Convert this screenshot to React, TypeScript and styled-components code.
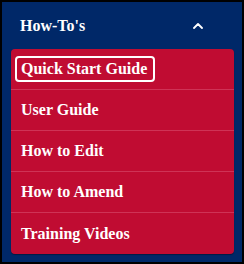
import React from "react";
import styled, { createGlobalStyle } from "styled-components";

const Global = createGlobalStyle`
  html, body { margin: 0; padding: 0; background: #000; }
  * { box-sizing: border-box; }
`;

const Frame = styled.div`
  width: 244px;
  height: 264px;
  border: 2px solid #000;
  background: #002868;
  display: flex;
  flex-direction: column;
  font-family: "Liberation Serif", "Times New Roman", serif;
`;

const Header = styled.div`
  height: 47px;
  display: flex;
  align-items: center;
  justify-content: space-between;
  padding: 0 39px 0 18px;
  color: #fff;
  font-size: 16px;
  font-weight: 700;
`;

const Title = styled.span`
  line-height: 1;
  padding-top: 1px;
`;

const Panel = styled.ul`
  list-style: none;
  margin: 0 8px 8px 9px;
  padding: 0;
  background: #c00c32;
  border-radius: 4px;
  box-shadow: 0 1px 1px rgba(0, 0, 0, 0.35);
  display: flex;
  flex-direction: column;
`;

const Row = styled.li<{ $last?: boolean }>`
  height: 41px;
  display: flex;
  align-items: center;
  padding-left: 4px;
  border-bottom: ${(p) => (p.$last ? "none" : "1px solid #cf3356")};
`;

const Link = styled.a<{ $focused?: boolean }>`
  display: inline-flex;
  align-items: center;
  height: 26px;
  padding: 0 6px 0 4px;
  border: 2px solid ${(p) => (p.$focused ? "#fff" : "transparent")};
  border-radius: 4px;
  color: #fff;
  font-size: 16px;
  font-weight: 700;
  text-decoration: none;
  white-space: nowrap;
`;

const Chevron = () => (
  <svg width="10" height="6" viewBox="0 0 10 6" fill="none">
    <path d="M1 5 L5 1 L9 5" stroke="#fff" strokeWidth="1.8" strokeLinecap="round" strokeLinejoin="round" />
  </svg>
);

const items = ["Quick Start Guide", "User Guide", "How to Edit", "How to Amend", "Training Videos"];

export default function App() {
  return (
    <>
      <Global />
      <Frame>
        <Header>
          <Title>How-To's</Title>
          <Chevron />
        </Header>
        <Panel>
          {items.map((t, i) => (
            <Row key={t} $last={i === items.length - 1}>
              <Link href="#" $focused={i === 0}>{t}</Link>
            </Row>
          ))}
        </Panel>
      </Frame>
    </>
  );
}
